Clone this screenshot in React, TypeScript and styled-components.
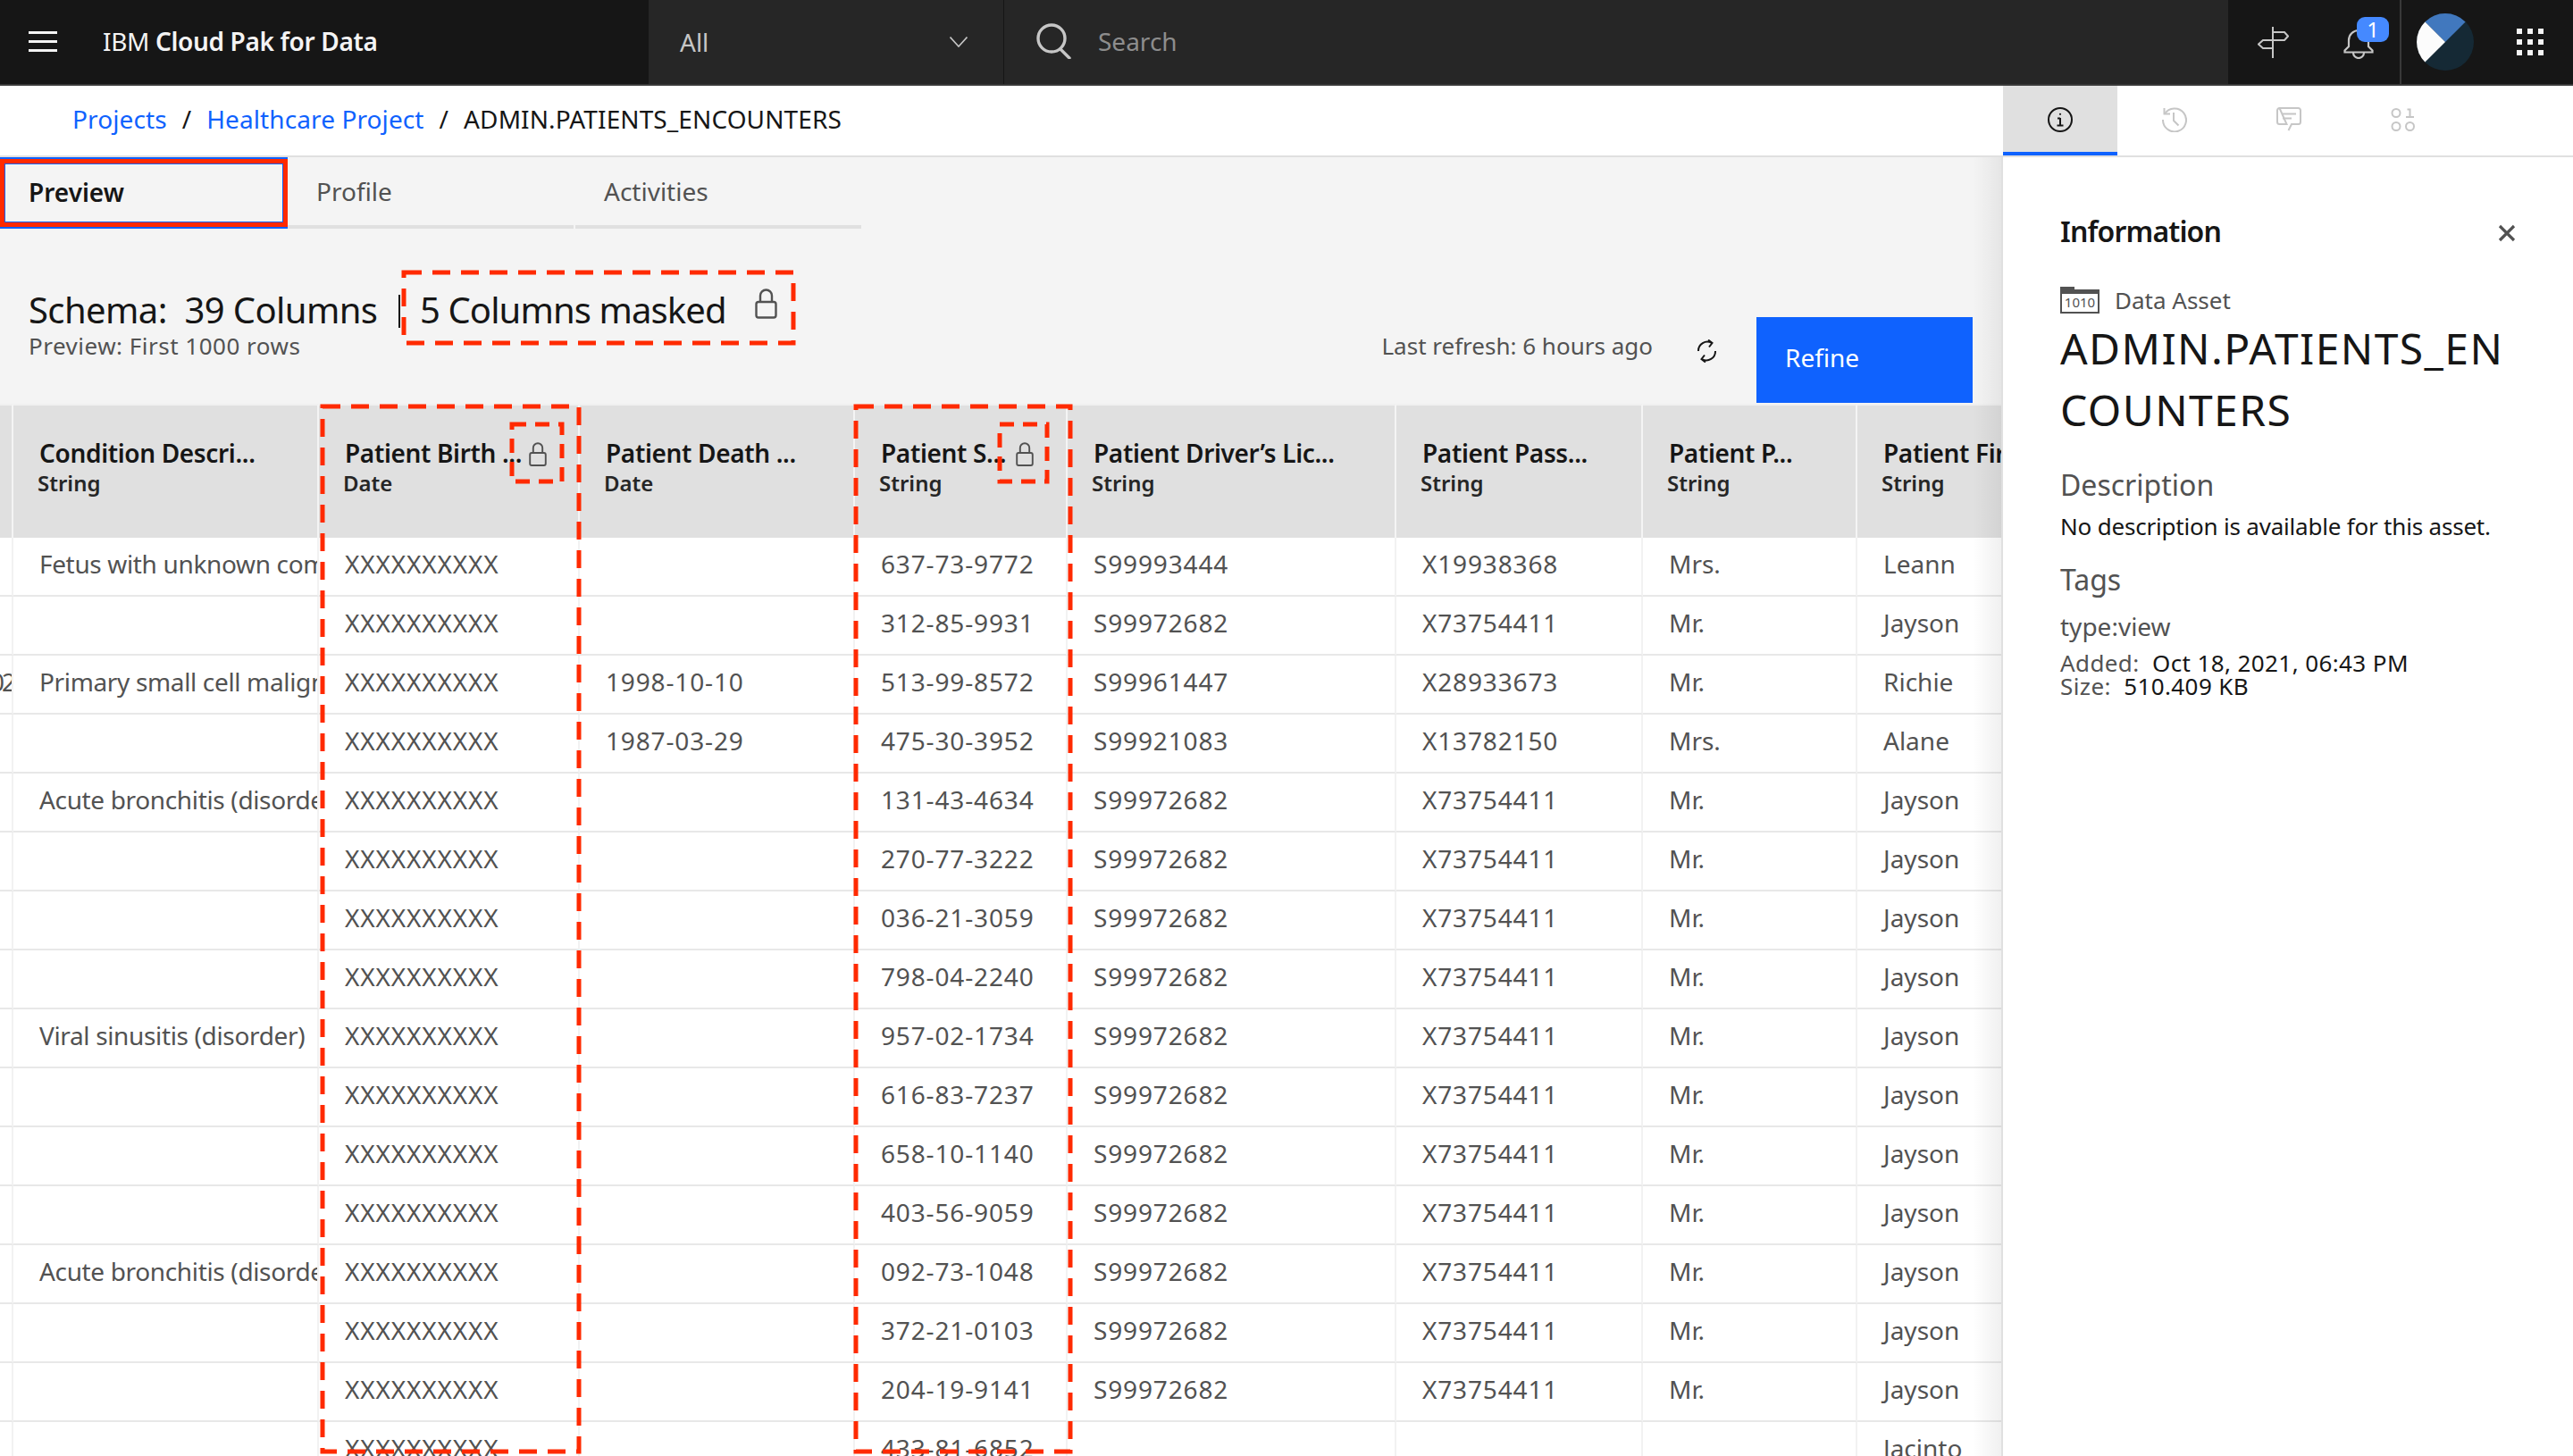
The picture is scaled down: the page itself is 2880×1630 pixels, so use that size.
import React from "react";
import styled, { createGlobalStyle } from "styled-components";

const FONT = `"Noto Sans", "Liberation Sans", sans-serif`;
const RED = "#ff2a00";

const GlobalStyle = createGlobalStyle`
  html, body {
    margin: 0;
    padding: 0;
    background: #f4f4f4;
  }
  body {
    font-family: ${FONT};
    color: #161616;
    overflow: hidden;
  }
  * {
    box-sizing: border-box;
  }
`;

type RowData = {
  left?: string;
  condition?: string;
  death?: string;
  ssn: string;
  license?: string;
  passport?: string;
  prefix?: string;
  first: string;
};

const jayson = (ssn: string, condition?: string): RowData => ({
  condition,
  ssn,
  license: "S99972682",
  passport: "X73754411",
  prefix: "Mr.",
  first: "Jayson",
});

const rows: RowData[] = [
  { condition: "Fetus with unknown complication", ssn: "637-73-9772", license: "S99993444", passport: "X19938368", prefix: "Mrs.", first: "Leann" },
  jayson("312-85-9931"),
  { left: "02", condition: "Primary small cell malignant neoplasm", death: "1998-10-10", ssn: "513-99-8572", license: "S99961447", passport: "X28933673", prefix: "Mr.", first: "Richie" },
  { death: "1987-03-29", ssn: "475-30-3952", license: "S99921083", passport: "X13782150", prefix: "Mrs.", first: "Alane" },
  jayson("131-43-4634", "Acute bronchitis (disorder)"),
  jayson("270-77-3222"),
  jayson("036-21-3059"),
  jayson("798-04-2240"),
  jayson("957-02-1734", "Viral sinusitis (disorder)"),
  jayson("616-83-7237"),
  jayson("658-10-1140"),
  jayson("403-56-9059"),
  jayson("092-73-1048", "Acute bronchitis (disorder)"),
  jayson("372-21-0103"),
  jayson("204-19-9141"),
  { ssn: "433-81-6852", first: "Jacinto" },
];

const columnWidths = [15, 342, 292, 308, 238, 368, 276, 240, 300];

const Page = styled.div`
  width: 2880px;
  height: 1630px;
  display: flex;
  flex-direction: column;
  overflow: hidden;
`;

/* top bar */
const TopBar = styled.header`
  height: 96px;
  flex: none;
  display: flex;
  background: #161616;
  border-bottom: 2px solid #393939;
`;

const Brand = styled.div`
  width: 726px;
  display: flex;
  align-items: center;
  padding-left: 32px;
  padding-bottom: 2px;
  gap: 51px;
`;

const Hamburger = styled.div`
  width: 32px;
  display: grid;
  gap: 7px;
  span {
    height: 3px;
    background: #f4f4f4;
  }
`;

const BrandName = styled.div`
  font-size: 28px;
  font-weight: 600;
  letter-spacing: -0.35px;
  color: #f4f4f4;
  span {
    font-weight: 400;
  }
`;

const ScopeSelect = styled.div`
  width: 398px;
  display: flex;
  align-items: center;
  justify-content: space-between;
  padding: 0 40px 0 35px;
  background: #262626;
  border-right: 1px solid #161616;
  color: #c6c6c6;
  font-size: 28px;
`;

const SearchBox = styled.div`
  flex: 1;
  display: flex;
  align-items: center;
  gap: 29px;
  padding-left: 36px;
  padding-bottom: 2px;
  background: #262626;
  color: #8d8d8d;
  font-size: 28px;
`;

const Actions = styled.div`
  width: 194px;
  flex: none;
  display: flex;
  align-items: center;
  padding-left: 33px;
  gap: 61px;
  border-right: 2px solid #393939;
`;

const BellWrap = styled.div`
  position: relative;
  width: 34px;
  height: 34px;
  margin-top: 4px;
`;

const Badge = styled.span`
  position: absolute;
  left: 15px;
  top: -13px;
  width: 36px;
  height: 28px;
  border-radius: 9px;
  background: #4589ff;
  color: #fff;
  font-size: 24px;
  line-height: 28px;
  text-align: center;
`;

const UserArea = styled.div`
  width: 192px;
  flex: none;
  display: flex;
  align-items: center;
  padding-left: 17px;
  gap: 48px;
`;

const AppGrid = styled.div`
  display: grid;
  grid-template-columns: repeat(3, 6px);
  gap: 6px;
  span {
    width: 6px;
    height: 6px;
    background: #f4f4f4;
  }
`;

/* body */
const Body = styled.div`
  flex: 1;
  min-height: 0;
  display: flex;
`;

const Main = styled.main`
  width: 2240px;
  flex: none;
  display: flex;
  flex-direction: column;
  overflow: hidden;
`;

const Breadcrumb = styled.nav`
  height: 80px;
  flex: none;
  display: flex;
  align-items: center;
  padding: 0 0 4px 81px;
  gap: 17px;
  background: #fff;
  border-bottom: 2px solid #e0e0e0;
  font-size: 28px;
  letter-spacing: 0.1px;
  a {
    color: #0f62fe;
    text-decoration: none;
  }
`;

const TabBar = styled.div`
  height: 80px;
  flex: none;
  display: flex;
`;

const ActiveTab = styled.div`
  width: 322px;
  display: flex;
  align-items: center;
  padding: 0 0 2px 32px;
  border-top: 2px solid #0f62fe;
  border-bottom: 2px solid #0f62fe;
  box-shadow: inset 0 0 0 5px ${RED}, inset 0 0 0 6px #0f62fe;
  font-size: 28px;
  font-weight: 600;
`;

const Tab = styled.div`
  width: 320px;
  margin-right: 2px;
  display: flex;
  align-items: center;
  padding-left: 32px;
  border-bottom: 4px solid #e0e0e0;
  color: #525252;
  font-size: 28px;
`;

const Toolbar = styled.div`
  height: 196px;
  flex: none;
  display: flex;
  justify-content: space-between;
  padding-left: 32px;
  padding-right: 32px;
`;

const SchemaBlock = styled.div`
  padding-top: 48px;
`;

const SchemaRow = styled.div`
  display: flex;
  align-items: center;
  font-size: 40px;
  line-height: 48px;
  height: 80px;
  white-space: pre;
  letter-spacing: -0.6px;
`;

const SchemaText = styled.span`
  width: 414px;
  padding-top: 5px;
`;

const SchemaDivider = styled.span`
  width: 2px;
  height: 37px;
  margin-top: 8px;
  background: #161616;
`;

const MaskedNote = styled.div`
  position: relative;
  margin-left: 4px;
  width: 436px;
  height: 79px;
  padding: 5px 18px 0 18px;
  display: flex;
  align-items: center;
  justify-content: space-between;
  letter-spacing: -0.9px;
`;

const NoteLock = styled.span`
  display: flex;
  margin-top: -13px;
`;

const SchemaSub = styled.div`
  margin-top: -9px;
  font-size: 26px;
  line-height: 24px;
  letter-spacing: 0.5px;
  color: #525252;
`;

const RefreshBlock = styled.div`
  display: flex;
  padding-top: 99px;
`;

const RefreshText = styled.div`
  margin-top: 16px;
  font-size: 26px;
  line-height: 32px;
  color: #525252;
`;

const RefreshIcon = styled.svg`
  margin: 25px 43px 0 48px;
`;

const RefineButton = styled.button`
  width: 242px;
  height: 96px;
  border: 0;
  padding: 0 0 6px 32px;
  background: #0f62fe;
  color: #fff;
  font-family: inherit;
  font-size: 28px;
  text-align: left;
`;

/* table */
const TableArea = styled.div`
  position: relative;
  flex: 1;
  min-height: 0;
  overflow: hidden;
  background: #fff;
`;

const Table = styled.table`
  table-layout: fixed;
  width: 2379px;
  border-collapse: separate;
  border-spacing: 0;
`;

const Th = styled.th`
  height: 150px;
  padding: 37px 0 0 29px;
  vertical-align: top;
  text-align: left;
  background: #e0e0e0;
  border-right: 2px solid #f4f4f4;
  border-top: 2px solid #f0f0f0;
  overflow: hidden;
  white-space: nowrap;
`;

const EdgeTh = styled(Th)`
  padding: 0;
`;

const ThName = styled.div`
  display: flex;
  align-items: center;
  height: 32px;
  font-size: 28px;
  font-weight: 600;
  letter-spacing: -0.35px;
  color: #161616;
`;

const ThType = styled.div`
  margin: 6px 0 0 -2px;
  font-size: 24px;
  line-height: 24px;
  font-weight: 600;
  color: #262626;
`;

const HeaderLock = styled.span<{ $gap: number }>`
  flex: none;
  display: flex;
  margin: 3px 0 0 ${(p) => p.$gap}px;
`;

const Td = styled.td<{ $track?: number }>`
  height: 66px;
  padding: 0 0 6px 29px;
  background: #fff;
  border-right: 2px solid #f2f2f2;
  border-bottom: 2px solid #e8e8e8;
  color: #525252;
  font-size: 28px;
  letter-spacing: ${(p) => p.$track ?? 0}px;
  white-space: nowrap;
  overflow: hidden;
`;

const EdgeTd = styled(Td)`
  padding: 0 0 6px;
  direction: rtl;
  letter-spacing: -3px;
`;

const FrameSvg = styled.svg`
  position: absolute;
  inset: 0;
  width: 100%;
  height: 100%;
  overflow: visible;
  pointer-events: none;
  rect {
    fill: none;
    stroke: ${RED};
    stroke-width: 5;
  }
`;

const ColumnMark = styled.div<{ $left: number; $width: number }>`
  position: absolute;
  top: 3px;
  left: ${(p) => p.$left}px;
  width: ${(p) => p.$width}px;
  height: 1170px;
`;

const LockSpot = styled.div<{ $left: number; $width: number }>`
  position: absolute;
  top: 23px;
  left: ${(p) => p.$left}px;
  width: ${(p) => p.$width}px;
  height: 64px;
`;

/* side panel */
const SidePanel = styled.aside`
  flex: 1;
  position: relative;
  display: flex;
  flex-direction: column;
  background: #fff;
  border-left: 2px solid #e0e0e0;
`;

const Rail = styled.div`
  height: 80px;
  flex: none;
  display: flex;
  border-bottom: 2px solid #e0e0e0;
  margin-left: -2px;
  padding-left: 2px;
  background: #fff;
`;

const RailTab = styled.div<{ $active?: boolean }>`
  width: 128px;
  display: flex;
  align-items: center;
  justify-content: center;
  padding-top: 1px;
  background: ${(p) => (p.$active ? "#e0e0e0" : "transparent")};
  border-bottom: 4px solid ${(p) => (p.$active ? "#0f62fe" : "transparent")};
  color: ${(p) => (p.$active ? "#161616" : "#c6c6c6")};
`;

const PanelShadow = styled.div`
  position: absolute;
  top: 80px;
  bottom: 0;
  left: -34px;
  width: 32px;
  background: linear-gradient(to right, rgba(0, 0, 0, 0), rgba(0, 0, 0, 0.06));
`;

const PanelBody = styled.div`
  padding: 63px 64px 0 64px;
`;

const PanelHead = styled.div`
  display: flex;
  align-items: center;
  justify-content: space-between;
  font-size: 32px;
  line-height: 40px;
  font-weight: 600;
  letter-spacing: -0.85px;
  svg {
    margin-top: 3px;
  }
`;

const AssetType = styled.div`
  display: flex;
  align-items: center;
  gap: 17px;
  margin-top: 41px;
  font-size: 26px;
  line-height: 32px;
  color: #525252;
`;

const AssetTitle = styled.h1`
  margin: 3px 0 0;
  font-size: 48px;
  line-height: 69px;
  font-weight: 400;
  letter-spacing: 1.4px;
  color: #161616;
  word-break: break-all;
`;

const SectionLabel = styled.div<{ $top: number }>`
  margin-top: ${(p) => p.$top}px;
  font-size: 32px;
  line-height: 40px;
  color: #525252;
`;

const PanelText = styled.div<{ $top: number; $muted?: boolean }>`
  margin-top: ${(p) => p.$top}px;
  font-size: ${(p) => (p.$muted ? 28 : 26)}px;
  line-height: 32px;
  letter-spacing: ${(p) => (p.$muted ? 0 : -0.2)}px;
  color: ${(p) => (p.$muted ? "#525252" : "#161616")};
`;

const Meta = styled.div`
  margin-top: 12px;
  font-size: 26px;
  line-height: 26px;
  letter-spacing: 0.4px;
  color: #161616;
  white-space: pre;
  span {
    color: #525252;
  }
`;

const DashFrame = ({ dash = "20 12" }: { dash?: string }) => (
  <FrameSvg aria-hidden="true">
    <rect x="0" y="0" width="100%" height="100%" strokeDasharray={dash} />
  </FrameSvg>
);

const LockIcon = ({ size = 20, color = "#525252" }: { size?: number; color?: string }) => (
  <svg width={size} height={(size * 34) / 25} viewBox="0 0 25 34" fill="none" stroke={color} strokeWidth="2.4">
    <rect x="1.5" y="15" width="22" height="17.5" rx="2.5" />
    <path d="M6 15V8a6.5 6.5 0 0 1 13 0v7" />
  </svg>
);

const SearchIcon = () => (
  <svg width="40" height="40" viewBox="0 0 40 40" fill="none" stroke="#c6c6c6" strokeWidth="3.4">
    <circle cx="17" cy="17" r="15" />
    <path d="M27 29l10 10" strokeLinecap="round" />
  </svg>
);

const Chevron = () => (
  <svg width="20" height="12" viewBox="0 0 20 12" fill="none" stroke="#c6c6c6" strokeWidth="1.6">
    <path d="M0.5 0.5L10 11L19.5 0.5" />
  </svg>
);

const SignpostIcon = () => (
  <svg width="35" height="35" viewBox="0 0 35 35" fill="none" stroke="#c6c6c6" strokeWidth="2">
    <path d="M17 0v35" />
    <path d="M17 6h13l4 4.5-4 4.5H17" />
    <path d="M17 15H6l-5 4.5L6 24h11" />
  </svg>
);

const BellIcon = () => (
  <svg width="34" height="34" viewBox="0 0 34 34" fill="none" stroke="#c6c6c6" strokeWidth="2.2">
    <path d="M1.5 26.5v-2L6 20v-7a11 11 0 0 1 22 0v7l4.5 4.5v2z" />
    <path d="M11 27a6 6 0 0 0 12 0" />
  </svg>
);

const Avatar = () => (
  <svg width="64" height="64" viewBox="0 0 64 64">
    <circle cx="32" cy="32" r="32" fill="#152935" />
    <path d="M32 32L9.4 9.4A32 32 0 0 1 54.6 9.4z" fill="#4178be" />
    <path d="M32 32L9.4 54.6A32 32 0 0 1 9.4 9.4z" fill="#fcfcfc" />
  </svg>
);

const RefreshGlyph = () => (
  <RefreshIcon width="25" height="26" viewBox="0 0 25 26" fill="none" stroke="#161616" strokeWidth="2">
    <path d="M3 13a10 10 0 0 1 15-9" />
    <path d="M14 0.5l4.500 3.500-3.500 4.500" />
    <path d="M22 13a10 10 0 0 1-15 9" />
    <path d="M11 25.500l-4.500-3.500 3.500-4.500" />
  </RefreshIcon>
);

const InfoIcon = () => (
  <svg width="28" height="28" viewBox="0 0 28 28" fill="none" stroke="currentColor" strokeWidth="2">
    <circle cx="14" cy="14" r="13" />
    <path d="M14 12v8M10.5 20.5h7M11 12.5h3" />
    <circle cx="14" cy="7.8" r="1.1" fill="currentColor" stroke="none" />
  </svg>
);

const HistoryIcon = () => (
  <svg width="28" height="28" viewBox="0 0 28 28" fill="none" stroke="currentColor" strokeWidth="2">
    <path d="M2.5 1v6.5H9" />
    <path d="M3 7.5A13 13 0 1 1 1 14" />
    <path d="M13 6v9l5.5 5.5" />
  </svg>
);

const ChatIcon = () => (
  <svg width="28" height="28" viewBox="0 0 28 28" fill="none" stroke="currentColor" strokeWidth="2">
    <path d="M3.5 1h21A2.5 2.5 0 0 1 27 3.5v13a2.5 2.5 0 0 1-2.500 2.500H17l-3.500 7M11.500 19h-8A2.500 2.500 0 0 1 1 16.500v-13A2.500 2.500 0 0 1 3.500 1z" />
    <path d="M7 7.500h15M7 12.500h10" />
  </svg>
);

const BinaryIcon = () => (
  <svg width="28" height="28" viewBox="0 0 28 28" fill="none" stroke="currentColor" strokeWidth="2">
    <circle cx="6" cy="6.500" r="4.500" />
    <circle cx="6" cy="21.500" r="4.500" />
    <circle cx="21.500" cy="21.500" r="4.500" />
    <path d="M18.500 2.500h3V11M17 11h9" />
  </svg>
);

const CloseIcon = () => (
  <svg width="20" height="20" viewBox="0 0 20 20" fill="none" stroke="#525252" strokeWidth="3.200">
    <path d="M2 2l16 16M18 2L2 18" />
  </svg>
);

const DataAssetIcon = () => (
  <svg width="44" height="30" viewBox="0 0 44 30">
    <path d="M0 0h16v3h28v5H0z" fill="#525252" />
    <rect x="1" y="5" width="42" height="24" fill="none" stroke="#525252" strokeWidth="2" />
    <text x="22" y="23" textAnchor="middle" fontSize="15" fontFamily={FONT} fill="#525252">
      1010
    </text>
  </svg>
);

const dots = Array.from({ length: 9 }, (_, i) => i);

const CODE_TRACK = 0.85;
const CONDITION_TRACK = -0.35;

const App = () => {
  return (
    <Page>
      <GlobalStyle />
      <TopBar>
        <Brand>
          <Hamburger>
            <span />
            <span />
            <span />
          </Hamburger>
          <BrandName>
            <span>IBM </span>Cloud Pak for Data
          </BrandName>
        </Brand>
        <ScopeSelect>
          All
          <Chevron />
        </ScopeSelect>
        <SearchBox>
          <SearchIcon />
          Search
        </SearchBox>
        <Actions>
          <SignpostIcon />
          <BellWrap>
            <BellIcon />
            <Badge>1</Badge>
          </BellWrap>
        </Actions>
        <UserArea>
          <Avatar />
          <AppGrid>
            {dots.map((d) => (
              <span key={d} />
            ))}
          </AppGrid>
        </UserArea>
      </TopBar>
      <Body>
        <Main>
          <Breadcrumb>
            <a href="#projects">Projects</a>
            <span>/</span>
            <a href="#project">Healthcare Project</a>
            <span>/</span>
            <span>ADMIN.PATIENTS_ENCOUNTERS</span>
          </Breadcrumb>
          <TabBar>
            <ActiveTab>Preview</ActiveTab>
            <Tab>Profile</Tab>
            <Tab>Activities</Tab>
          </TabBar>
          <Toolbar>
            <SchemaBlock>
              <SchemaRow>
                <SchemaText>{"Schema:  39 Columns"}</SchemaText>
                <SchemaDivider />
                <MaskedNote>
                  <span>5 Columns masked</span>
                  <NoteLock>
                    <LockIcon size={25} />
                  </NoteLock>
                  <DashFrame />
                </MaskedNote>
              </SchemaRow>
              <SchemaSub>Preview: First 1000 rows</SchemaSub>
            </SchemaBlock>
            <RefreshBlock>
              <RefreshText>Last refresh: 6 hours ago</RefreshText>
              <RefreshGlyph />
              <RefineButton>Refine</RefineButton>
            </RefreshBlock>
          </Toolbar>
          <TableArea>
            <Table>
              <colgroup>
                {columnWidths.map((w, i) => (
                  <col key={i} width={w} />
                ))}
              </colgroup>
              <thead>
                <tr>
                  <EdgeTh />
                  <Th>
                    <ThName>Condition Descri...</ThName>
                    <ThType>String</ThType>
                  </Th>
                  <Th>
                    <ThName>
                      Patient Birth ...
                      <HeaderLock $gap={8}>
                        <LockIcon />
                      </HeaderLock>
                    </ThName>
                    <ThType>Date</ThType>
                  </Th>
                  <Th>
                    <ThName>Patient Death ...</ThName>
                    <ThType>Date</ThType>
                  </Th>
                  <Th>
                    <ThName>
                      Patient S...
                      <HeaderLock $gap={11}>
                        <LockIcon />
                      </HeaderLock>
                    </ThName>
                    <ThType>String</ThType>
                  </Th>
                  <Th>
                    <ThName>Patient Driver’s Lic...</ThName>
                    <ThType>String</ThType>
                  </Th>
                  <Th>
                    <ThName>Patient Pass...</ThName>
                    <ThType>String</ThType>
                  </Th>
                  <Th>
                    <ThName>Patient P...</ThName>
                    <ThType>String</ThType>
                  </Th>
                  <Th>
                    <ThName>Patient First...</ThName>
                    <ThType>String</ThType>
                  </Th>
                </tr>
              </thead>
              <tbody>
                {rows.map((row, i) => (
                  <tr key={i}>
                    <EdgeTd>{row.left}</EdgeTd>
                    <Td $track={CONDITION_TRACK}>{row.condition}</Td>
                    <Td $track={CODE_TRACK}>XXXXXXXXXX</Td>
                    <Td $track={CODE_TRACK}>{row.death}</Td>
                    <Td $track={CODE_TRACK}>{row.ssn}</Td>
                    <Td $track={CODE_TRACK}>{row.license}</Td>
                    <Td $track={CODE_TRACK}>{row.passport}</Td>
                    <Td>{row.prefix}</Td>
                    <Td>{row.first}</Td>
                  </tr>
                ))}
              </tbody>
            </Table>
            <ColumnMark $left={361} $width={287}>
              <DashFrame />
            </ColumnMark>
            <LockSpot $left={573} $width={56}>
              <DashFrame dash="16 10" />
            </LockSpot>
            <ColumnMark $left={958} $width={240}>
              <DashFrame />
            </ColumnMark>
            <LockSpot $left={1119} $width={53}>
              <DashFrame dash="16 10" />
            </LockSpot>
          </TableArea>
        </Main>
        <SidePanel>
          <PanelShadow />
          <Rail>
            <RailTab $active>
              <InfoIcon />
            </RailTab>
            <RailTab>
              <HistoryIcon />
            </RailTab>
            <RailTab>
              <ChatIcon />
            </RailTab>
            <RailTab>
              <BinaryIcon />
            </RailTab>
          </Rail>
          <PanelBody>
            <PanelHead>
              Information
              <CloseIcon />
            </PanelHead>
            <AssetType>
              <DataAssetIcon />
              Data Asset
            </AssetType>
            <AssetTitle>ADMIN.PATIENTS_ENCOUNTERS</AssetTitle>
            <SectionLabel $top={30}>Description</SectionLabel>
            <PanelText $top={10}>No description is available for this asset.</PanelText>
            <SectionLabel $top={24}>Tags</SectionLabel>
            <PanelText $top={16} $muted>
              type:view
            </PanelText>
            <Meta>
              <span>Added:</span>
              {"  Oct 18, 2021, 06:43 PM"}
              <br />
              <span>Size:</span>
              {"  510.409 KB"}
            </Meta>
          </PanelBody>
        </SidePanel>
      </Body>
    </Page>
  );
};

export default App;
